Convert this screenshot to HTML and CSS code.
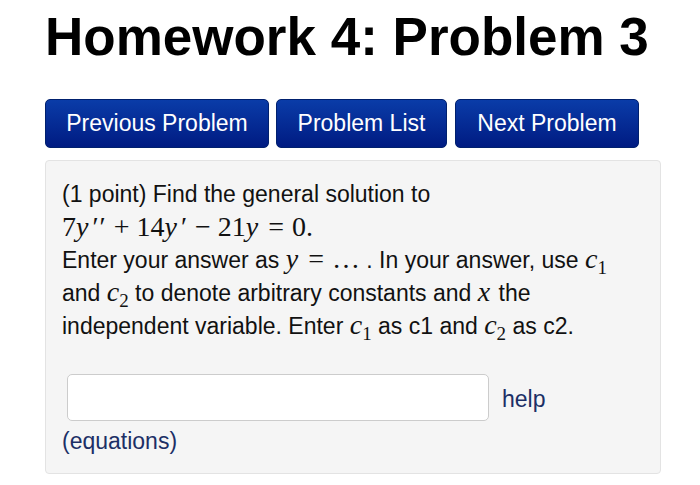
FILE: index.html
```html
<!DOCTYPE html>
<html>
<head>
<meta charset="utf-8">
<link rel="stylesheet" href="styles.css">
</head>
<body>
<div class="page">
  <h1 class="title">Homework 4: Problem 3</h1>
  <div class="nav">
    <a class="btn btn-prev">Previous Problem</a>
    <a class="btn btn-list">Problem List</a>
    <a class="btn btn-next">Next Problem</a>
  </div>
  <div class="panel">
    <div class="problem">
      <div class="line">(1 point) Find the general solution to</div>
      <div class="line math-line"><span class="m">7<i class="v">y</i><span class="pr">′′</span><span class="op">+</span>14<i class="v">y</i><span class="pr">′</span><span class="op">−</span>21<i class="v">y</i><span class="rel">=</span>0.</span></div>
      <div class="line">Enter your answer as <span class="m"><i class="v">y</i><span class="rel">=</span>…</span> . In your answer, use <span class="m"><i>c</i><sub>1</sub></span></div>
      <div class="line">and <span class="m"><i>c</i><sub>2</sub></span> to denote arbitrary constants and <span class="m"><i class="v">x</i></span> the</div>
      <div class="line">independent variable. Enter <span class="m"><i>c</i><sub>1</sub></span> as c1 and <span class="m"><i>c</i><sub>2</sub></span> as c2.</div>
    </div>
    <div class="answer">
      <div class="field"></div>
      <a class="link help">help</a>
    </div>
    <a class="link eq">(equations)</a>
  </div>
</div>
</body>
</html>
```
FILE: styles.css
```css
html, body {
  margin: 0;
  padding: 0;
  background: #ffffff;
}
.page {
  padding-left: 45px;
  width: 616px;
  font-family: "Liberation Sans", Arial, sans-serif;
  color: #111111;
}
.title {
  margin: 10px 0 0 0;
  font-size: 53px;
  line-height: 53px;
  font-weight: bold;
  color: #000000;
}
.nav {
  display: flex;
  margin-top: 36px;
}
.btn {
  display: flex;
  align-items: center;
  justify-content: center;
  box-sizing: border-box;
  height: 49px;
  font-size: 23px;
  color: #ffffff;
  background: linear-gradient(#0a3ca8, #001b82);
  border: 1px solid #00206e;
  border-radius: 5px;
}
.btn-prev {
  width: 224px;
}
.btn-list {
  width: 171px;
  margin-left: 7px;
}
.btn-next {
  width: 184px;
  margin-left: 8px;
}
.panel {
  margin-top: 12px;
  background: #f5f5f5;
  border: 1px solid #e3e3e3;
  border-radius: 4px;
  padding: 17px 16px 19px 16px;
  height: 276px;
}
.problem {
  font-size: 23px;
}
.line {
  height: 33px;
  line-height: 33px;
}
.math-line {
  padding-top: 1px;
  height: 32px;
  line-height: 32px;
}
.m {
  font-family: "Liberation Serif", "Times New Roman", serif;
  font-size: 28px;
  line-height: 20px;
}
.m i {
  font-style: italic;
}
.m i.v {
  padding-right: 2px;
}
.pr {
  margin-left: 2px;
  letter-spacing: 1px;
}
.op {
  margin: 0 7px;
}
.rel {
  margin: 0 8px;
}
.m sub {
  font-size: 19px;
  line-height: 0;
  vertical-align: -6px;
}
.answer {
  display: flex;
  align-items: center;
  gap: 13px;
  margin-top: 31px;
  margin-left: 5px;
}
.field {
  width: 420px;
  height: 45px;
  background: #ffffff;
  border: 1px solid #cccccc;
  border-radius: 5px;
}
.link {
  font-size: 23px;
  color: #1c2f66;
}
.help {
  margin-top: 4px;
}
.eq {
  display: block;
  margin-top: 5px;
  line-height: 30px;
}
```
